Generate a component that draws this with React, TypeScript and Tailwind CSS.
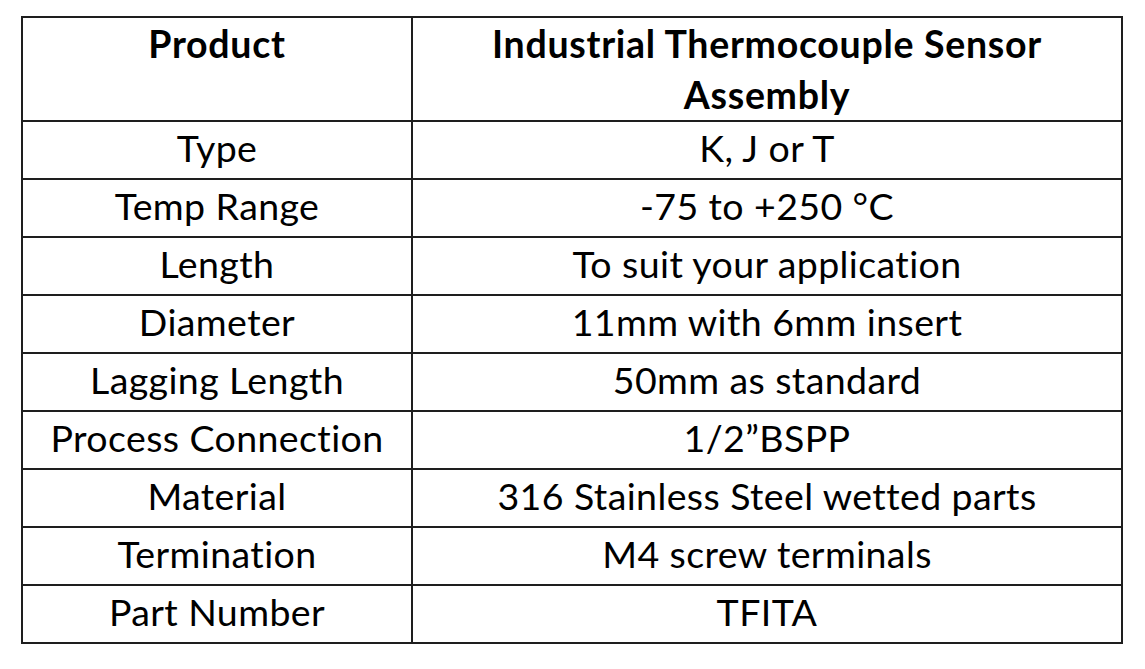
const rows: [string, string][] = [
  ['Type', 'K, J or T'],
  ['Temp Range', '-75 to +250 °C'],
  ['Length', 'To suit your application'],
  ['Diameter', '11mm with 6mm insert'],
  ['Lagging Length', '50mm as standard'],
  ['Process Connection', '1/2\u201dBSPP'],
  ['Material', '316 Stainless Steel wetted parts'],
  ['Termination', 'M4 screw terminals'],
  ['Part Number', 'TFITA'],
];

export default function App() {
  return (
    <div className="w-[1145px] h-[669px] bg-white pt-[16px] pl-[21px] font-['Lato',sans-serif] text-black text-[37.5px] leading-[51px] tracking-[0.4px] [font-variant-ligatures:none]">
      <div className="w-[1102px] border-2 border-[#1e1e1e]">
        <div className="flex h-[102px] font-bold tracking-[0.7px]">
          <div className="w-[390px] border-r-2 border-[#1e1e1e] text-center">Product</div>
          <div className="flex-1 text-center">
            Industrial Thermocouple Sensor
            <br />
            Assembly
          </div>
        </div>
        {rows.map(([k, v]) => (
          <div key={k} className="flex h-[58px] border-t-2 border-[#1e1e1e]">
            <div className="w-[390px] border-r-2 border-[#1e1e1e] text-center">{k}</div>
            <div className="flex-1 text-center">{v}</div>
          </div>
        ))}
      </div>
    </div>
  );
}
